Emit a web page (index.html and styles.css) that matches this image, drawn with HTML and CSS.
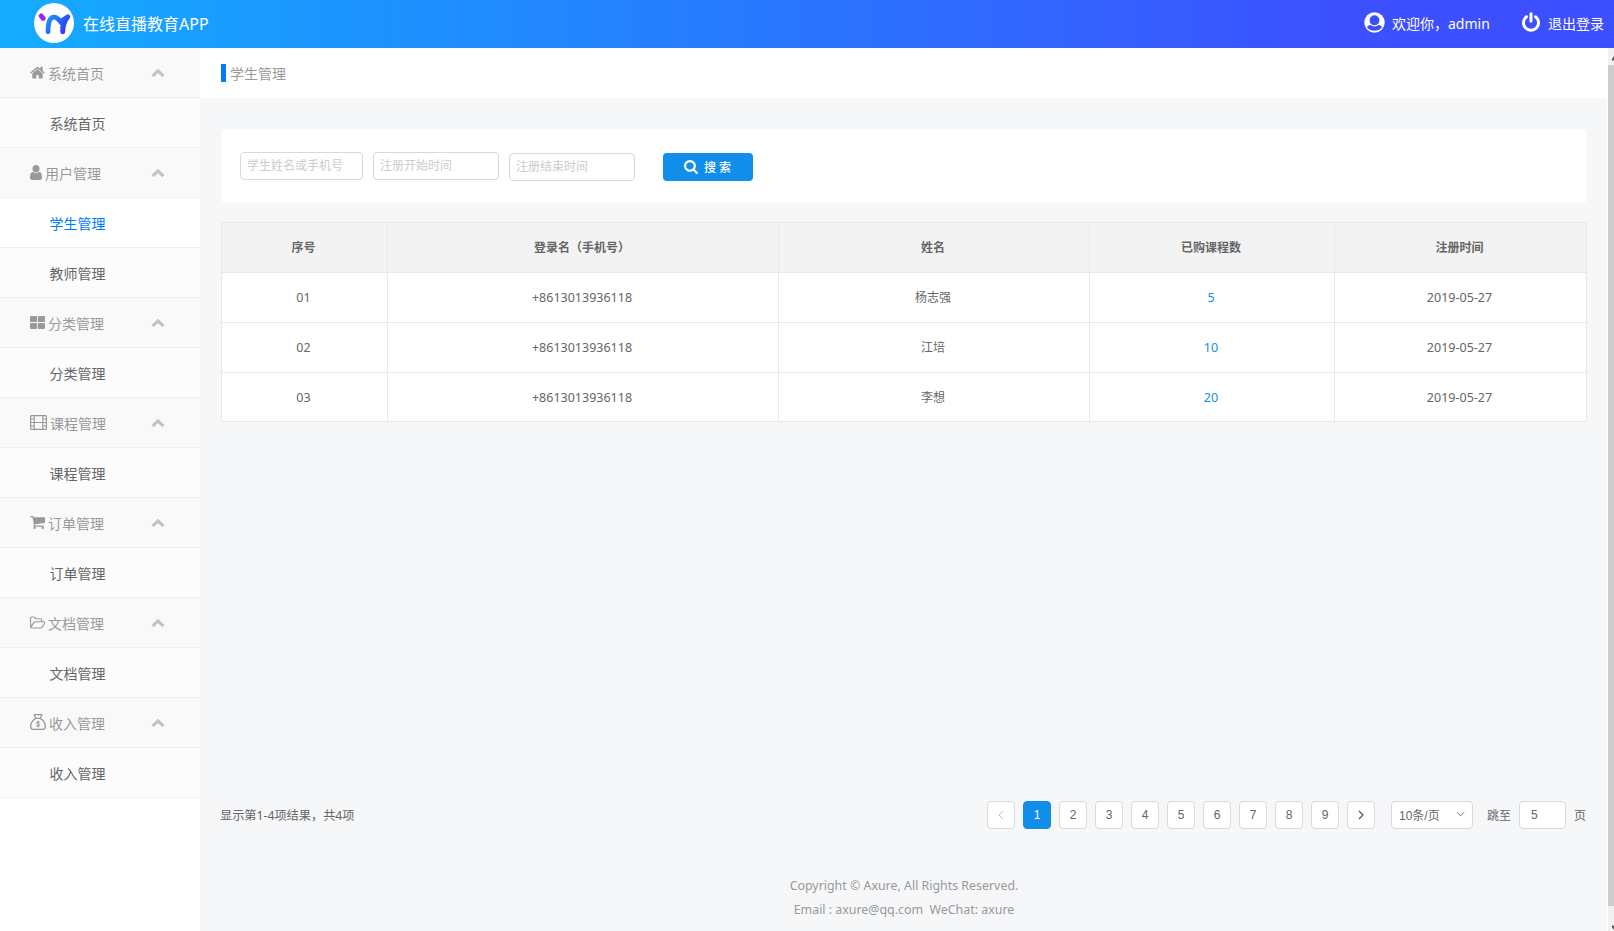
FILE: index.html
```html
<!DOCTYPE html>
<html lang="zh-CN">
<head>
    <meta charset="UTF-8">
    <meta name="viewport" content="width=device-width, initial-scale=1.0">
    <title>学生管理</title>
    <link rel="stylesheet" href="styles.css">
</head>
<body>

<!-- Shared icons -->
<svg class="icon-defs" width="0" height="0">
  <symbol id="up" viewBox="0 0 14 10"><path d="M1.600 8.200 7 2.900 12.400 8.200" fill="none" stroke="currentColor" stroke-width="3.100"/></symbol>
</svg>

<!-- Header -->
<header class="header">
  <svg class="logo" viewBox="0 0 40 40">
    <defs>
      <linearGradient id="logo-blue" gradientUnits="userSpaceOnUse" x1="12" y1="14" x2="32" y2="28">
        <stop offset="0" stop-color="#1a9bff"/>
        <stop offset="1" stop-color="#2f38fa"/>
      </linearGradient>
    </defs>
    <circle cx="20" cy="20" r="20" fill="#fff"/>
    <path d="M7.200 13 9.200 15.400" stroke="#9a26f5" stroke-width="5" stroke-linecap="round"/>
    <path d="M14 28.800C14 20 15.500 14.200 20 14.200C24.500 14.200 25.500 18.500 28.700 21V28.800M28.700 28.800C28.900 23 30 18 33.800 13.800L26.500 18.500" fill="none" stroke="url(#logo-blue)" stroke-width="4.800" stroke-linecap="round" stroke-linejoin="round"/>
  </svg>
  <span class="brand">在线直播教育APP</span>
  <div class="header-user">
    <svg class="icon-user" viewBox="0 0 21 21">
      <circle cx="10.500" cy="10.500" r="10.200" fill="#fff"/>
      <path d="M5.600 8.200a4.900 4.900 0 0 1 9.800 0c0 2-.9 3.300-1.700 4.200 1.900.7 3.600 1.300 4.300 2.900-3.100 4.700-11.900 4.700-15 0 .7-1.600 2.400-2.200 4.300-2.900-.8-.9-1.700-2.200-1.700-4.200z" fill="#3d50ff"/>
      <path d="M6.600 12.100C8.600 14.400 12.400 14.400 14.400 12.100" fill="none" stroke="#fff" stroke-width="1.300"/>
    </svg>
    <span>欢迎你，admin</span>
  </div>
  <div class="header-logout">
    <svg class="icon-power" viewBox="128 0 1536 1664"><path fill="#fff" d="M1664 896q0 156-61 298t-164 245-245 164-298 61-298-61-245-164-164-245-61-298q0-182 80.500-343t226.500-270q43-32 95.500-25t83.500 50q32 42 24.500 94.500t-49.500 84.500q-98 74-151.500 181t-53.500 228q0 104 40.500 198.500t109.500 163.500 163.500 109.500 198.500 40.500 198.500-40.500 163.500-109.500 109.500-163.500 40.500-198.500q0-121-53.500-228t-151.500-181q-42-32-49.500-84.500t24.500-94.500q31-43 84-50t95 25q146 109 226.500 270t80.500 343zm-640-768v640q0 52-38 90t-90 38-90-38-38-90v-640q0-52 38-90t90-38 90 38 38 90z"/></svg>
    <span>退出登录</span>
  </div>
</header>

<div class="page">
  <!-- Sidebar -->
  <nav class="sidebar">
    <div class="menu-title">
      <svg class="menu-icon w15" viewBox="64 160 1664 1440" preserveAspectRatio="none"><path d="M1472 992v480q0 26-19 45t-45 19h-384v-384h-256v384h-384q-26 0-45-19t-19-45v-480q0-1 .5-3t.5-3l575-474 575 474q1 2 1 6zm223-69l-62 74q-8 9-21 11h-3q-13 0-21-7l-692-577-692 577q-12 8-24 7-13-2-21-11l-62-74q-8-10-7-23.500t11-21.500l719-599q32-26 76-26t76 26l244 204v-195q0-14 9-23t23-9h192q14 0 23 9t9 23v408l219 182q10 8 11 21.500t-7 23.500z"/></svg>
      <span>系统首页</span>
      <svg class="arrow"><use href="#up"/></svg>
    </div>
    <a class="menu-item">系统首页</a>
    <div class="menu-title">
      <svg class="menu-icon w12" viewBox="256 128 1280 1536" preserveAspectRatio="none"><path d="M1536 1399q0 109-62.500 187t-150.500 78h-854q-88 0-150.500-78t-62.500-187q0-85 8.500-160.500t31.500-152 58.500-131 94-89 134.500-34.500q131 128 313 128t313-128q76 0 134.500 34.500t94 89 58.500 131 31.500 152 8.500 160.500zm-256-887q0 159-112.500 271.500t-271.500 112.500-271.500-112.500-112.500-271.500 112.500-271.500 271.500-112.500 271.500 112.500 112.500 271.500z"/></svg>
      <span>用户管理</span>
      <svg class="arrow"><use href="#up"/></svg>
    </div>
    <a class="menu-item active">学生管理</a>
    <a class="menu-item">教师管理</a>
    <div class="menu-title">
      <svg class="menu-icon w15" viewBox="0 0 15 13"><rect width="7.100" height="6.100" rx="1.200"/><rect x="7.900" width="7.100" height="6.100" rx="1.200"/><rect y="6.900" width="7.100" height="6.100" rx="1.200"/><rect x="7.900" y="6.900" width="7.100" height="6.100" rx="1.200"/></svg>
      <span>分类管理</span>
      <svg class="arrow"><use href="#up"/></svg>
    </div>
    <a class="menu-item">分类管理</a>
    <div class="menu-title">
      <svg class="menu-icon w17" viewBox="0 0 17 15"><path d="M1.500.6h14q.9 0 .9.900v12q0 .9-.9.900h-14q-.9 0-.9-.9v-12q0-.9.900-.9zM4.200.6v13.800M12.800.6v13.800M4.200 7.500h8.600M.6 4h3.600M.6 7.500h3.600M.6 11h3.600M12.800 4h3.600M12.800 7.500h3.600M12.800 11h3.600" fill="none" stroke="#999" stroke-width="1.200"/></svg>
      <span>课程管理</span>
      <svg class="arrow"><use href="#up"/></svg>
    </div>
    <a class="menu-item">课程管理</a>
    <div class="menu-title">
      <svg class="menu-icon w15" viewBox="64 256 1664 1408" preserveAspectRatio="none"><path d="M704 1536q0 52-38 90t-90 38-90-38-38-90 38-90 90-38 90 38 38 90zm896 0q0 52-38 90t-90 38-90-38-38-90 38-90 90-38 90 38 38 90zm128-1088v512q0 24-16.500 42.500t-40.500 21.500l-1044 122q13 60 13 70 0 16-24 64h920q26 0 45 19t19 45-19 45-45 19h-1024q-26 0-45-19t-19-45q0-11 8-31.500t16-36 21.500-40 15.500-29.500l-177-823h-204q-26 0-45-19t-19-45 19-45 45-19h256q16 0 28.500 6.500t19.500 15.500 13 24.500 8 26 5.500 29.500 4.500 26h1201q26 0 45 19t19 45z"/></svg>
      <span>订单管理</span>
      <svg class="arrow"><use href="#up"/></svg>
    </div>
    <a class="menu-item">订单管理</a>
    <div class="menu-title">
      <svg class="menu-icon w15" viewBox="0 0 15 13"><path d="M.6 10.800V2.200q0-1.200 1.200-1.200h2.200q1.200 0 1.200 1.200v.6h5.300q1.200 0 1.200 1.200v1.600M.6 10.800q.2 1.200 1.200 1.200h8.900q.8 0 1.400-.6l2.300-3.900q.6-1.700-.6-1.700H5.200q-.9 0-1.500.8L1 10.900" fill="none" stroke="#999" stroke-width="1.100" stroke-linejoin="round"/></svg>
      <span>文档管理</span>
      <svg class="arrow"><use href="#up"/></svg>
    </div>
    <a class="menu-item">文档管理</a>
    <div class="menu-title">
      <svg class="menu-icon w16" viewBox="0 0 16 16"><g fill="none" stroke="#999" stroke-width="1.300" stroke-linejoin="round"><path d="M5.800 4.400 4.200.7H11.800L10.200 4.400ZM5.800 4.400C3 6 .7 9.500.7 12.500Q.7 15.300 3 15.300H13Q15.300 15.300 15.300 12.500C15.300 9.500 13 6 10.200 4.400"/><path d="M9.800 8.300C9.200 7.400 6.500 7.500 6.500 8.800C6.500 10.400 9.800 9.700 9.800 11.300C9.800 12.700 6.900 12.800 6.200 11.600M8.100 6.700V13.400" stroke-width="1"/></g></svg>
      <span>收入管理</span>
      <svg class="arrow"><use href="#up"/></svg>
    </div>
    <a class="menu-item">收入管理</a>
  </nav>

  <!-- Main content -->
  <main class="main">
    <div class="page-title"><h1>学生管理</h1></div>

    <div class="content">
      <form class="search-bar">
        <input type="text" class="search-input name" placeholder="学生姓名或手机号">
        <input type="text" class="search-input" placeholder="注册开始时间">
        <input type="text" class="search-input end" placeholder="注册结束时间">
        <button type="button" class="search-btn">
          <svg viewBox="64 128 1664 1664" width="14" height="14"><path fill="#fff" d="M1216 832q0-185-131.500-316.500t-316.500-131.500-316.500 131.500-131.500 316.500 131.500 316.500 316.500 131.500 316.500-131.500 131.500-316.500zm512 832q0 52-38 90t-90 38q-54 0-90-38l-343-342q-179 124-399 124-143 0-273.500-55.500t-225-150-150-225-55.500-273.500 55.500-273.500 150-225 225-150 273.500-55.500 273.500 55.500 225 150 150 225 55.500 273.500q0 220-124 399l343 343q37 37 37 90z"/></svg>
          搜 索
        </button>
      </form>

      <table class="student-table">
        <colgroup>
          <col class="col-no"><col class="col-login"><col class="col-name"><col class="col-course"><col class="col-date">
        </colgroup>
        <thead>
          <tr><th>序号</th><th>登录名（手机号）</th><th>姓名</th><th>已购课程数</th><th>注册时间</th></tr>
        </thead>
        <tbody>
          <tr><td>01</td><td>+8613013936118</td><td class="name">杨志强</td><td><a>5</a></td><td>2019-05-27</td></tr>
          <tr><td>02</td><td>+8613013936118</td><td class="name">江培</td><td><a>10</a></td><td>2019-05-27</td></tr>
          <tr><td>03</td><td>+8613013936118</td><td class="name">李想</td><td><a>20</a></td><td>2019-05-27</td></tr>
        </tbody>
      </table>

      <!-- Pagination -->
      <div class="pagination">
        <span class="total">显示第1-4项结果，共4项</span>
        <div class="pages">
          <a class="page-btn prev"><svg viewBox="0 0 6 10" width="6" height="10"><path d="M5 1 1 5 5 9" fill="none" stroke="#bbb"/></svg></a>
          <a class="page-btn current">1</a>
          <a class="page-btn">2</a>
          <a class="page-btn">3</a>
          <a class="page-btn">4</a>
          <a class="page-btn">5</a>
          <a class="page-btn">6</a>
          <a class="page-btn">7</a>
          <a class="page-btn">8</a>
          <a class="page-btn">9</a>
          <a class="page-btn"><svg viewBox="0 0 6 10" width="6" height="10"><path d="M1 1 5 5 1 9" fill="none" stroke="#555" stroke-width="1.200"/></svg></a>
        </div>
        <div class="page-size">
          <span>10条/页</span>
          <svg viewBox="0 0 10 6" width="9" height="6"><path d="M1 1 5 5 9 1" fill="none" stroke="#666"/></svg>
        </div>
        <span class="jump">跳至</span>
        <input type="text" class="jump-input" value="5">
        <span class="unit">页</span>
      </div>

      <footer class="footer">
        <p>Copyright © Axure, All Rights Reserved.</p>
        <p>Email : axure@qq.com&nbsp; WeChat: axure</p>
      </footer>
    </div>
  </main>

  <!-- Scrollbar -->
  <div class="scrollbar">
    <div class="scroll-end"><svg viewBox="0 0 3 5" width="3" height="5"><path d="M3 0V4L1 5V3Z" fill="#505050"/></svg></div>
    <div class="scroll-thumb"></div>
    <div class="scroll-end bottom"><svg viewBox="0 0 3 5" width="3" height="5"><path d="M3 5V1L1 0V2Z" fill="#505050"/></svg></div>
  </div>
</div>

</body>
</html>
```
FILE: styles.css
```css
* {
  box-sizing: border-box;
}

body {
  margin: 0;
  height: 931px;
  overflow: hidden;
  display: flex;
  flex-direction: column;
  font-family: "Noto Sans", "Noto Sans CJK SC", sans-serif;
  font-size: 14px;
  color: #666;
  background-color: #fff;
}

.icon-defs {
  display: none;
}

/* Header */
.header {
  display: flex;
  align-items: center;
  height: 48px;
  flex: none;
  padding: 0 10px 2px 34px;
  color: #fff;
  background: linear-gradient(90deg, #14abff 0%, #1e90ff 26%, #2878ff 47%, #3d50ff 84%);
  white-space: nowrap;
}

.logo {
  width: 40px;
  height: 40px;
  margin-right: 9px;
}

.brand {
  font-size: 16px;
}

.header-user,
.header-logout {
  display: flex;
  align-items: center;
}

.header-user {
  width: 158px;
  margin-left: auto;
}

.icon-user {
  width: 21px;
  height: 21px;
  margin: -2px 7px 0 0;
}

.icon-power {
  width: 18px;
  height: 20px;
  margin: -3px 8px 0 0;
}

/* Sidebar */
.page {
  display: flex;
  flex: 1;
  min-height: 0;
}

.sidebar {
  width: 200px;
  flex: none;
  background-color: #fff;
}

.menu-title,
.menu-item {
  display: flex;
  align-items: center;
  height: 50px;
  border-bottom: 1px solid #f0f0f0;
}

.menu-title {
  padding: 0 35px 0 30px;
  color: #999;
  background-color: #f9f9f9;
}

.menu-item {
  padding-left: 49.5px;
  background-color: #fcfcfc;
}

.menu-item.active {
  color: #007aff;
  background-color: #fff;
}

.menu-icon {
  height: 13px;
  margin-right: 3px;
  fill: #999;
}

.menu-icon.w12 {
  width: 12px;
  height: 15px;
}

.menu-icon.w15 {
  width: 15px;
}

.menu-icon.w16 {
  width: 16px;
  height: 16px;
  margin-top: -2px;
}

.menu-icon.w17 {
  width: 17px;
  height: 15px;
}

.arrow {
  width: 14px;
  height: 10px;
  margin-left: auto;
  color: #bdc3c7;
}

/* Main */
.main {
  display: flex;
  flex-direction: column;
  width: 1407px;
  flex: none;
  margin-right: 1px;
}

.page-title {
  display: flex;
  align-items: center;
  height: 50px;
  flex: none;
  padding-left: 21px;
  background-color: #fff;
}

.page-title h1 {
  margin: 0;
  padding: 1px 0 0 4px;
  border-left: 5px solid #007aff;
  font-size: 14px;
  line-height: 17px;
  font-weight: normal;
  color: #999;
}

.content {
  display: flex;
  flex-direction: column;
  flex: 1;
  padding: 31px 20px 0 21px;
  background-color: #f5f7f9;
}

.search-bar {
  display: flex;
  align-items: flex-start;
  height: 74px;
  margin: 0 1px;
  padding: 23px 18px;
  border-radius: 3px;
  background-color: #fff;
}

.search-input {
  width: 126px;
  height: 28px;
  margin: 0 10px 0 0;
  padding: 0 6px 2px;
  border: 1px solid #d9d9d9;
  border-radius: 4px;
  font-family: inherit;
  font-size: 12px;
  outline: none;
}

.search-input.name {
  width: 123px;
}

.search-input.end {
  margin: 1px 28px 0 0;
}

.search-input::placeholder {
  color: #ccc;
}

.search-btn {
  display: flex;
  align-items: center;
  justify-content: center;
  gap: 6px;
  width: 90px;
  height: 28px;
  margin-top: 1px;
  padding: 0 1px 0 0;
  border: none;
  border-radius: 4px;
  font-family: inherit;
  font-size: 12px;
  font-weight: 500;
  color: #fff;
  background-color: #108ee9;
}

/* Table */
.student-table {
  width: 1366px;
  margin-top: 19px;
  table-layout: fixed;
  border-collapse: collapse;
}

.col-no { width: 166px; }
.col-login { width: 391px; }
.col-name { width: 311px; }
.col-course { width: 245px; }
.col-date { width: 252px; }

.student-table th,
.student-table td {
  height: 50px;
  padding: 0 2px 0 0;
  border: 1px solid #e9e9e9;
  text-align: center;
  line-height: 18px;
}

.student-table th {
  font-size: 12px;
  font-weight: bold;
  background-color: #f3f3f3;
}

.student-table td {
  font-size: 12.5px;
  background-color: #fff;
}

.student-table td.name {
  font-size: 12px;
}

.student-table tbody tr:last-child td {
  height: 49px;
  padding-top: 1px;
}

.student-table a {
  color: #108ee9;
}

/* Pagination */
.pagination {
  display: flex;
  align-items: center;
  height: 28px;
  margin-top: 379px;
  font-size: 12px;
  white-space: nowrap;
}

.total {
  margin-left: -1px;
  font-size: 12.2px;
}

.pages {
  display: flex;
  gap: 8px;
  margin-left: auto;
}

.page-btn {
  display: flex;
  align-items: center;
  justify-content: center;
  width: 28px;
  height: 28px;
  border: 1px solid #d9d9d9;
  border-radius: 4px;
  font-family: "Liberation Sans", sans-serif;
  background-color: #fff;
}

.page-btn.current {
  color: #fff;
  border-color: #108ee9;
  background-color: #108ee9;
}

.page-size {
  display: flex;
  align-items: center;
  justify-content: space-between;
  width: 82px;
  height: 28px;
  margin-left: 16px;
  padding: 0 7px 2px;
  border: 1px solid #d9d9d9;
  border-radius: 4px;
  font-family: "Liberation Sans", "Noto Sans CJK SC", sans-serif;
  background-color: #fff;
}

.jump {
  margin: 0 8px 0 14px;
}

.jump-input {
  width: 47px;
  height: 28px;
  padding: 0 11px;
  border: 1px solid #d9d9d9;
  border-radius: 4px;
  font-family: "Liberation Sans", sans-serif;
  font-size: 12px;
  color: #666;
}

.unit {
  margin: 0 1px 0 8px;
}

/* Footer */
.footer {
  margin-top: 45px;
  text-align: center;
  font-size: 12.4px;
  color: #999;
}

.footer p {
  margin: 0;
  line-height: 24px;
}

/* Scrollbar */
.scrollbar {
  display: flex;
  flex-direction: column;
  width: 6px;
  flex: none;
  background-color: #f1f1f1;
}

.scroll-end {
  display: flex;
  justify-content: flex-end;
  height: 17px;
  padding-top: 8px;
}

.scroll-end.bottom {
  height: 25px;
  padding-top: 19px;
}

.scroll-thumb {
  flex: 1;
  background-color: #cdcdcd;
}
```
